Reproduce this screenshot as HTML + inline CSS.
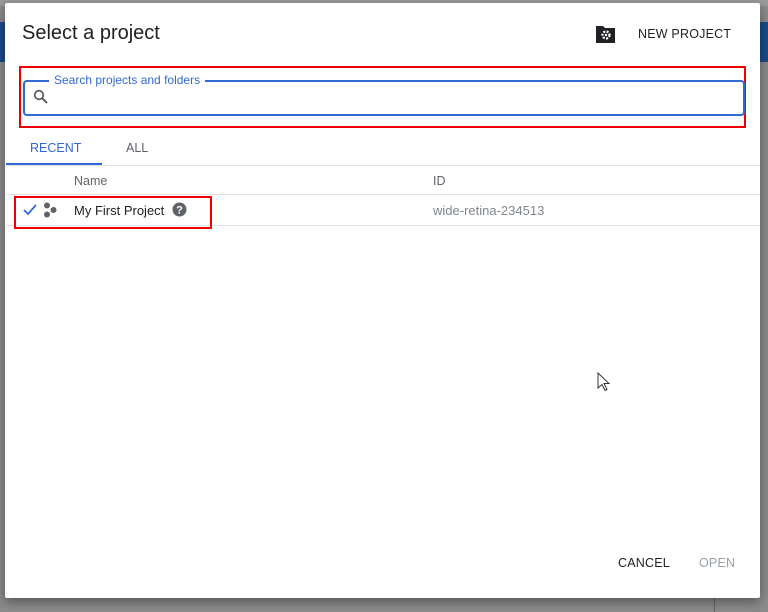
<!DOCTYPE html>
<html><head><style>
body{margin:0;width:768px;height:612px;overflow:hidden;background:#8c8c8c;font-family:"Liberation Sans",sans-serif;position:relative}
.bar{position:absolute;left:0;right:0;top:22px;height:40px;background:#1c4a8a}
.topline{position:absolute;left:0;right:0;top:0;height:6px;background:#9a9a9a}
.dlg{position:absolute;left:5px;top:3px;width:755px;height:595px;background:#fff;border-radius:2px;box-shadow:0 4px 12px rgba(0,0,0,.4)}
.a{position:absolute;white-space:nowrap}
</style></head><body>
<div class="topline"></div>
<div class="bar"></div>
<div class="a" style="left:714px;top:598px;width:1px;height:14px;background:#666"></div>
<div class="dlg">
<div class="a" style="left:17px;top:19px;font-size:20px;color:#202124">Select a project</div>
<svg class="a" style="left:590px;top:21px" width="22" height="20" viewBox="0 0 22 20"><path d="M1 2h7l2 2h10v15H1z" fill="#202124"/><circle cx="11" cy="11" r="3.5" fill="none" stroke="#fff" stroke-width="2.2" stroke-dasharray="2 1.4"/><circle cx="11" cy="11" r="1.2" fill="#fff"/></svg>
<div class="a" style="left:633px;top:24px;font-size:12.5px;color:#202124;letter-spacing:.2px">NEW PROJECT</div>
<div class="a" style="left:14px;top:63px;width:727px;height:62px;border:2px solid #e00;box-sizing:border-box"></div>
<div class="a" style="left:18px;top:77px;width:722px;height:36px;border:2px solid #3367d6;border-radius:4px;box-sizing:border-box"></div>
<div class="a" style="left:44px;top:70px;background:#fff;padding:0 5px;font-size:12px;color:#3367d6">Search projects and folders</div>
<svg class="a" style="left:28px;top:86px" width="16" height="16" viewBox="0 0 16 16"><circle cx="6" cy="6" r="4.3" fill="none" stroke="#5f6368" stroke-width="1.8"/><path d="M9 9l5 5" stroke="#5f6368" stroke-width="2"/></svg>
<div class="a" style="left:25px;top:138px;font-size:12.5px;color:#3367d6">RECENT</div>
<div class="a" style="left:121px;top:138px;font-size:12.5px;color:#5f6368">ALL</div>
<div class="a" style="left:1px;top:160px;width:96px;height:2px;background:#3367d6"></div>
<div class="a" style="left:1px;top:162px;width:754px;height:1px;background:#e0e0e0"></div>
<div class="a" style="left:69px;top:171px;font-size:12.5px;color:#5f6368">Name</div>
<div class="a" style="left:428px;top:171px;font-size:12.5px;color:#5f6368">ID</div>
<div class="a" style="left:1px;top:191px;width:754px;height:1px;background:#e0e0e0"></div>
<div class="a" style="left:1px;top:222px;width:754px;height:1px;background:#e0e0e0"></div>
<div class="a" style="left:9px;top:193px;width:198px;height:33px;border:2px solid #e00;box-sizing:border-box"></div>
<svg class="a" style="left:17px;top:200px" width="16" height="14" viewBox="0 0 16 14"><path d="M2 7l4 4 8-9" fill="none" stroke="#3367d6" stroke-width="1.8"/></svg>
<svg class="a" style="left:38px;top:199px" width="14" height="16" viewBox="0 0 14 16"><circle cx="4" cy="3.5" r="3" fill="#5f6368"/><circle cx="10.5" cy="8" r="3" fill="#5f6368"/><circle cx="4" cy="12.5" r="3" fill="#5f6368"/></svg>
<div class="a" style="left:69px;top:200px;font-size:13px;color:#202124">My First Project</div>
<svg class="a" style="left:167px;top:199px" width="15" height="15" viewBox="0 0 15 15"><circle cx="7.5" cy="7.5" r="7" fill="#5f6368"/><text x="7.5" y="11.5" font-size="11" font-weight="bold" fill="#fff" text-anchor="middle" font-family="Liberation Sans">?</text></svg>
<div class="a" style="left:428px;top:200px;font-size:13px;color:#80868b">wide-retina-234513</div>
<svg class="a" style="left:592px;top:369px" width="14" height="20" viewBox="0 0 14 20"><path d="M1 1v15l4-3.5 3 6 2-1-3-6h5z" fill="#fff" stroke="#333" stroke-width="1"/></svg>
<div class="a" style="left:613px;top:553px;font-size:12.5px;color:#202124;letter-spacing:.2px">CANCEL</div>
<div class="a" style="left:694px;top:553px;font-size:12.5px;color:#9aa0a6;letter-spacing:.2px">OPEN</div>
</div>
</body></html>
